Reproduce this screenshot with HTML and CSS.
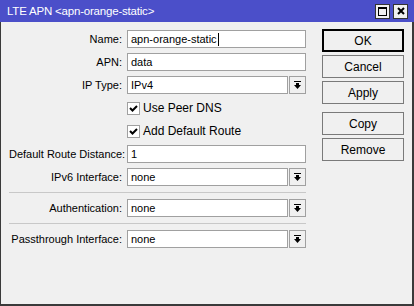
FILE: index.html
```html
<!DOCTYPE html>
<html lang="en">
<head>
  <meta charset="UTF-8" />
  <title>LTE APN</title>
  <link rel="stylesheet" href="styles.css">
</head>
<body>
  <div class="window">
    <div class="titlebar">
      <span class="title">LTE APN &lt;apn-orange-static&gt;</span>
      <div class="title-btns">
        <span class="tbtn">
          <svg width="9" height="9" viewBox="0 0 9 9"><path d="M0 0h9v9H0z M1 2v6h7V2z" fill="#000" fill-rule="evenodd"/></svg>
        </span>
        <span class="tbtn">
          <svg width="8" height="8" viewBox="0 0 8 8"><path d="M1 1l6 6M7 1l-6 6" stroke="#000" stroke-width="2"/></svg>
        </span>
      </div>
    </div>

    <div class="content">
      <div class="form">
        <div class="row">
          <span class="label">Name:</span>
          <div class="field">apn-orange-static<span class="caret"></span></div>
        </div>
        <div class="row">
          <span class="label">APN:</span>
          <div class="field">data</div>
        </div>
        <div class="row">
          <span class="label">IP Type:</span>
          <div class="select">
            <div class="field">IPv4</div>
            <span class="drop"><svg width="7" height="8" viewBox="0 0 7 8"><rect width="7" height="1"/><rect x="2" y="2" width="3" height="2"/><path d="M0 4h7l-3.5 4z"/></svg></span>
          </div>
        </div>
        <div class="row">
          <span class="label"></span>
          <span class="check"><svg width="11" height="11" viewBox="0 0 11 11"><path d="M2 5l2.5 2.5L9 3" fill="none" stroke="#000" stroke-width="2"/></svg></span>
          <span class="check-text">Use Peer DNS</span>
        </div>
        <div class="row">
          <span class="label"></span>
          <span class="check"><svg width="11" height="11" viewBox="0 0 11 11"><path d="M2 5l2.5 2.5L9 3" fill="none" stroke="#000" stroke-width="2"/></svg></span>
          <span class="check-text">Add Default Route</span>
        </div>
        <div class="row">
          <span class="label">Default Route Distance:</span>
          <div class="field">1</div>
        </div>
        <div class="row">
          <span class="label">IPv6 Interface:</span>
          <div class="select">
            <div class="field">none</div>
            <span class="drop"><svg width="7" height="8" viewBox="0 0 7 8"><rect width="7" height="1"/><rect x="2" y="2" width="3" height="2"/><path d="M0 4h7l-3.5 4z"/></svg></span>
          </div>
        </div>
        <div class="sep"></div>
        <div class="row">
          <span class="label">Authentication:</span>
          <div class="select">
            <div class="field">none</div>
            <span class="drop"><svg width="7" height="8" viewBox="0 0 7 8"><rect width="7" height="1"/><rect x="2" y="2" width="3" height="2"/><path d="M0 4h7l-3.5 4z"/></svg></span>
          </div>
        </div>
        <div class="sep"></div>
        <div class="row">
          <span class="label">Passthrough Interface:</span>
          <div class="select">
            <div class="field">none</div>
            <span class="drop"><svg width="7" height="8" viewBox="0 0 7 8"><rect width="7" height="1"/><rect x="2" y="2" width="3" height="2"/><path d="M0 4h7l-3.5 4z"/></svg></span>
          </div>
        </div>
      </div>

      <div class="buttons">
        <button class="btn default">OK</button>
        <button class="btn">Cancel</button>
        <button class="btn">Apply</button>
        <button class="btn spaced">Copy</button>
        <button class="btn">Remove</button>
      </div>
    </div>
  </div>
</body>
</html>
```

FILE: styles.css
```css
body {
  margin: 0;
  background: #f0f0f0;
  font-family: "Liberation Sans", Arial, sans-serif;
  font-size: 11px;
  color: #000;
}
.window {
  width: 414px;
  height: 306px;
  display: flex;
  flex-direction: column;
}
.titlebar {
  height: 22px;
  background: #4b4fc9;
  display: flex;
  align-items: center;
  justify-content: space-between;
  padding: 0 7px;
  box-sizing: border-box;
}
.title {
  color: #fff;
  font-size: 11.5px;
  letter-spacing: -0.2px;
}
.title-btns {
  display: flex;
  gap: 3px;
  margin-right: -1px;
}
.tbtn {
  width: 15px;
  height: 15px;
  box-sizing: border-box;
  background: #f0f0f0;
  border: 1px solid #333;
  display: flex;
  align-items: center;
  justify-content: center;
}
.content {
  flex: 1;
  display: flex;
  align-items: flex-start;
  padding: 8px 0 0 8px;
  border-left: 1px solid #3a3a3a;
  border-right: 2px solid #3a3a3a;
  border-bottom: 2px solid #3a3a3a;
}
.form {
  width: 297px;
  display: flex;
  flex-direction: column;
  gap: 5px;
}
.row {
  display: flex;
  align-items: center;
  height: 18px;
}
.label {
  width: 113px;
  margin-right: 5px;
  text-align: right;
  white-space: nowrap;
  flex-shrink: 0;
}
.field {
  flex: 1;
  height: 18px;
  box-sizing: border-box;
  background: #fff;
  border: 1px solid #a0a0a0;
  padding: 0 3px;
  line-height: 16px;
  display: flex;
  align-items: center;
}
.caret {
  display: inline-block;
  width: 1px;
  height: 13px;
  background: #000;
  margin-left: 1px;
}
.select {
  flex: 1;
  display: flex;
  gap: 1px;
}
.drop {
  width: 17px;
  height: 18px;
  box-sizing: border-box;
  border: 1px solid #a0a0a0;
  background: #f0f0f0;
  display: flex;
  align-items: center;
  justify-content: center;
}
.check {
  width: 13px;
  height: 13px;
  box-sizing: border-box;
  border: 1px solid #a0a0a0;
  background: #fff;
  display: flex;
  align-items: center;
  justify-content: center;
  margin-right: 3px;
}
.check-text {
  font-size: 12px;
}
.sep {
  height: 1px;
  background: #c8c8c8;
  margin: 1px 0;
}
.buttons {
  width: 82px;
  margin-left: 16px;
  margin-top: -1px;
  display: flex;
  flex-direction: column;
  gap: 3px;
}
.btn {
  height: 23px;
  box-sizing: border-box;
  background: #f0f0f0;
  border: 1px solid #7a7a7a;
  font-family: inherit;
  font-size: 12px;
  color: #000;
  padding: 0;
}
.btn.default {
  border: 2px solid #000;
}
.btn.spaced {
  margin-top: 5px;
}
```
